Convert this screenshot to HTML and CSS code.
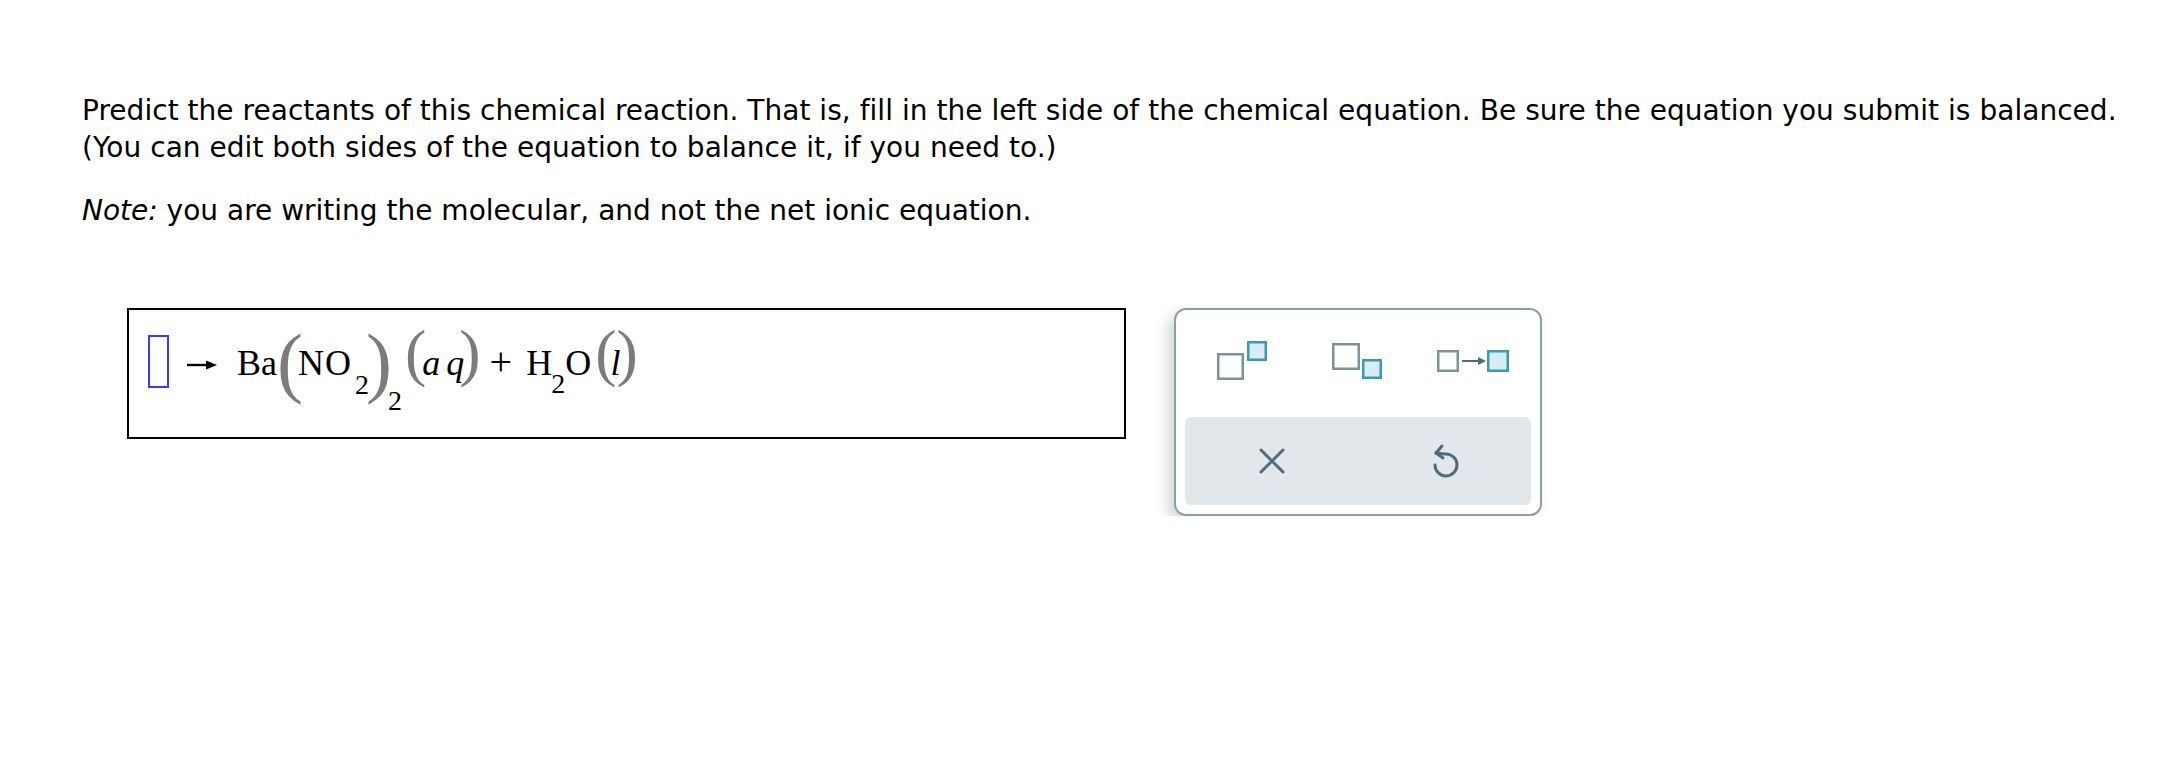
FILE: index.html
```html
<!DOCTYPE html>
<html>
<head>
<meta charset="utf-8">
<link rel="stylesheet" href="styles.css">
</head>
<body>
<div class="page">
  <p class="prompt">Predict the reactants of this chemical reaction. That is, fill in the left side of the chemical equation. Be sure the equation you submit is balanced.<br>(You can edit both sides of the equation to balance it, if you need to.)</p>
  <p class="note"><i>Note:</i> you are writing the molecular, and not the net ionic equation.</p>
  <div class="work">
    <div class="eqbox">
      <div class="eq"><span class="cursor"></span><svg class="arrow" width="30" height="12" viewBox="0 0 30 12"><line x1="0" y1="6" x2="22" y2="6" stroke="#000" stroke-width="2.4"/><polygon points="19,1.5 30,6 19,10.5" fill="#000"/></svg><span class="ba">Ba</span><span class="bp bpl">(</span><span class="no">NO</span><sub class="s1">2</sub><span class="bp bpr">)</span><sub class="s2">2</sub><span class="mp mpl">(</span><i class="aq">a</i><i class="q">q</i><span class="mp mpr">)</span><span class="plus">+</span><span>H</span><sub class="s3">2</sub><span>O</span><span class="mp mpl2">(</span><i class="ll">l</i><span class="mp mpr2">)</span></div>
    </div>
    <div class="panel">
      <div class="tools">
        <div class="tool">
          <svg width="53" height="42" viewBox="0 0 53 42"><rect x="2.25" y="14.25" width="24.5" height="24.5" fill="#fff" stroke="#7b939c" stroke-width="2.5"/><rect x="32.25" y="2.25" width="17.5" height="17.5" fill="#d4eef4" stroke="#3f98b3" stroke-width="2.5"/></svg>
        </div>
        <div class="tool">
          <svg width="53" height="39" viewBox="0 0 53 39"><rect x="2.25" y="2.25" width="25.5" height="24.5" fill="#fff" stroke="#7b939c" stroke-width="2.5"/><rect x="32.25" y="18.25" width="17.5" height="17.5" fill="#d4eef4" stroke="#3f98b3" stroke-width="2.5"/></svg>
        </div>
        <div class="tool">
          <svg width="75" height="25" viewBox="0 0 75 25"><rect x="2.25" y="2.25" width="19.5" height="19.5" fill="#fff" stroke="#7b939c" stroke-width="2.5"/><line x1="26" y1="12" x2="44" y2="12" stroke="#4e6d7a" stroke-width="2"/><polygon points="42,8 50,12 42,16" fill="#4e6d7a"/><rect x="52.25" y="2.25" width="19.5" height="19.5" fill="#d4eef4" stroke="#3f98b3" stroke-width="2.5"/></svg>
        </div>
      </div>
      <div class="actions">
        <div class="act">
          <svg width="26" height="26" viewBox="0 0 26 26"><path d="M2 2 L24 24 M24 2 L2 24" stroke="#4e6d7a" stroke-width="3" stroke-linecap="round" fill="none"/></svg>
        </div>
        <div class="act">
          <svg width="28" height="36" viewBox="0 0 28 36"><path d="M4 22 A11 11 0 1 0 14 11 L5 10" stroke="#4e6d7a" stroke-width="3" stroke-linecap="round" stroke-linejoin="round" fill="none"/><path d="M11 3 L5 10 L12 15" stroke="#4e6d7a" stroke-width="3" stroke-linecap="round" stroke-linejoin="round" fill="none"/></svg>
        </div>
      </div>
    </div>
  </div>
</div>
</body>
</html>
```

FILE: styles.css
```css
html, body {
  margin: 0;
  padding: 0;
  background: #fff;
}
.page {
  padding: 92px 0 0 82px;
  font-family: "DejaVu Sans", Verdana, sans-serif;
  font-size: 28px;
  line-height: 37px;
  color: #000;
}
.prompt {
  margin: 0;
  letter-spacing: 0.03px;
}
.note {
  margin: 26px 0 0;
}
.work {
  display: flex;
  align-items: flex-start;
  margin-top: 79px;
  margin-left: 45px;
}
.eqbox {
  box-sizing: border-box;
  width: 999px;
  height: 131px;
  border: 2px solid #000;
  padding: 22px 0 0 19px;
}
.eq {
  font-family: "Liberation Serif", "Times New Roman", serif;
  font-size: 36px;
  line-height: 60px;
  white-space: nowrap;
  color: #000;
}
.cursor {
  display: inline-block;
  box-sizing: border-box;
  width: 21px;
  height: 53px;
  border: 2px solid #3b3bf5;
  vertical-align: -13px;
}
.arrow {
  margin-left: 18px;
  vertical-align: 4px;
}
.ba {
  margin-left: 20px;
}
.no {
  letter-spacing: 1px;
}
.bp, .mp {
  color: #7c7c7c;
  line-height: 0;
}
.bp {
  font-size: 78px;
  vertical-align: -13px;
}
.mp {
  font-size: 64px;
  vertical-align: 1px;
}
.bpl {
  letter-spacing: -5px;
}
.bpr {
  letter-spacing: -4px;
}
.mpl {
  margin-left: 3px;
  letter-spacing: -4px;
}
.mpl2 {
  margin-left: 4px;
  letter-spacing: -6px;
}
sub {
  font-size: 28px;
  line-height: 0;
}
.s1 {
  vertical-align: -19px;
  margin-left: 3px;
  letter-spacing: -3px;
}
.s2 {
  vertical-align: -35px;
}
.s3 {
  vertical-align: -18px;
  margin-left: -1px;
}
.aq {
  margin-right: 6px;
}
.q {
  letter-spacing: -5px;
}
.plus {
  font-size: 40px;
  margin: 0 14px 0 9px;
}
.ll {
  letter-spacing: -4px;
}
.panel {
  box-sizing: border-box;
  width: 368px;
  height: 208px;
  margin-left: 48px;
  border: 2px solid #8aa0a9;
  border-radius: 12px;
  padding: 0 9px 9px;
  display: flex;
  flex-direction: column;
  background: #fff;
  box-shadow: -6px 6px 14px rgba(30, 50, 60, 0.2);
}
.tools {
  height: 107px;
  display: flex;
}
.tool {
  flex: 1;
  display: flex;
  align-items: center;
  justify-content: center;
  padding-bottom: 5px;
}
.actions {
  flex: 1;
  display: flex;
  background: #e1e7ea;
  border-radius: 6px;
}
.act {
  flex: 1;
  display: flex;
  align-items: center;
  justify-content: center;
}
svg {
  display: inline-block;
}
```
